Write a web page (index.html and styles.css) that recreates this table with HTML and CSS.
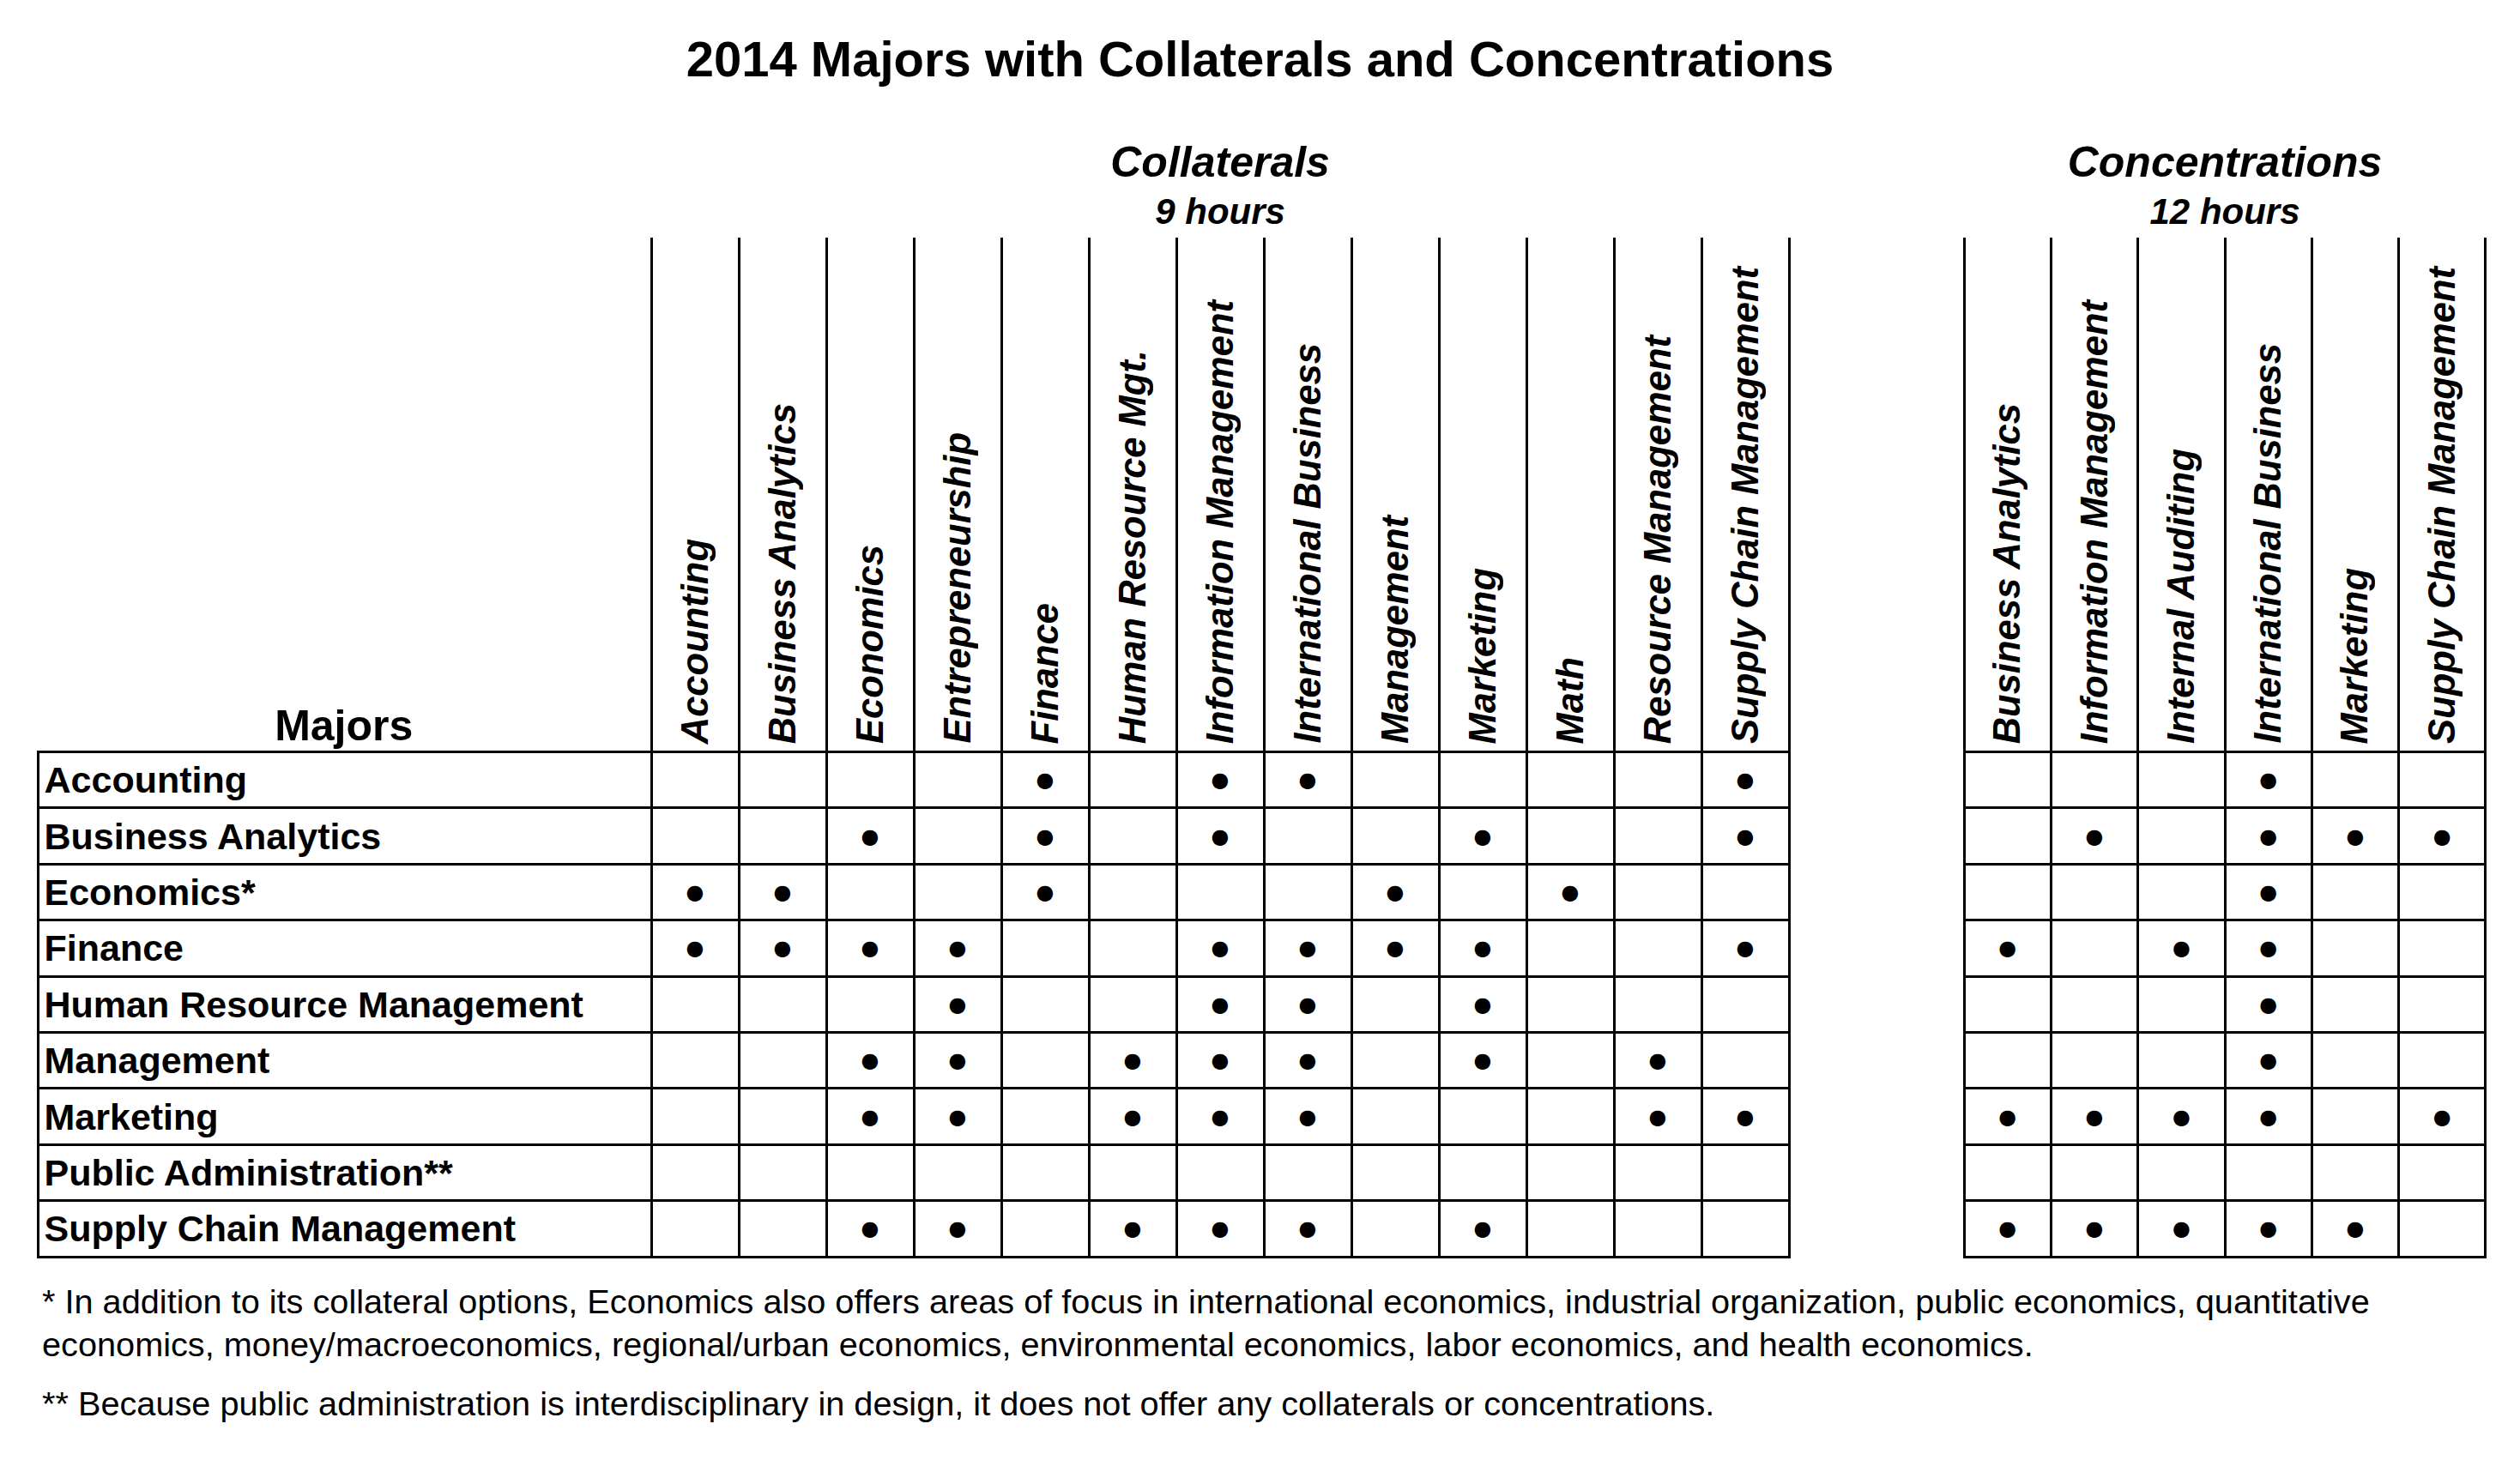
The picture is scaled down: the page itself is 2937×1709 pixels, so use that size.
FILE: index.html
```html
<!DOCTYPE html>
<html lang="en">
<head>
<meta charset="utf-8">
<title>2014 Majors with Collaterals and Concentrations</title>
<link rel="stylesheet" href="styles.css">
</head>
<body>
<h1 class="title">2014 Majors with Collaterals and Concentrations</h1>
<div class="chart">
<table class="grid">
  <colgroup>
    <col class="c-major">
    <col class="c-col"><col class="c-col"><col class="c-col"><col class="c-col"><col class="c-col"><col class="c-col"><col class="c-col"><col class="c-col"><col class="c-col"><col class="c-col"><col class="c-col"><col class="c-col"><col class="c-col">
    <col class="c-gap">
    <col class="c-con"><col class="c-con"><col class="c-con"><col class="c-con"><col class="c-con"><col class="c-con">
  </colgroup>
  <thead>
    <tr class="r-group">
      <th class="blank"></th>
      <th class="group" colspan="13"><div class="g-name">Collaterals</div><div class="g-hours">9 hours</div></th>
      <th class="gap"></th>
      <th class="group" colspan="6"><div class="g-name">Concentrations</div><div class="g-hours">12 hours</div></th>
    </tr>
    <tr class="r-head">
      <th class="majors">Majors</th>
      <th class="vh"><span>Accounting</span></th>
      <th class="vh"><span>Business Analytics</span></th>
      <th class="vh"><span>Economics</span></th>
      <th class="vh"><span>Entrepreneurship</span></th>
      <th class="vh"><span>Finance</span></th>
      <th class="vh"><span>Human Resource Mgt.</span></th>
      <th class="vh"><span>Information Management</span></th>
      <th class="vh"><span>International Business</span></th>
      <th class="vh"><span>Management</span></th>
      <th class="vh"><span>Marketing</span></th>
      <th class="vh"><span>Math</span></th>
      <th class="vh"><span>Resource Management</span></th>
      <th class="vh"><span>Supply Chain Management</span></th>
      <th class="gap"></th>
      <th class="vh"><span>Business Analytics</span></th>
      <th class="vh"><span>Information Management</span></th>
      <th class="vh"><span>Internal Auditing</span></th>
      <th class="vh"><span>International Business</span></th>
      <th class="vh"><span>Marketing</span></th>
      <th class="vh"><span>Supply Chain Management</span></th>
    </tr>
  </thead>
  <tbody>
    <tr>
      <th class="lbl">Accounting</th>
      <td></td><td></td><td></td><td></td><td>●</td><td></td><td>●</td><td>●</td><td></td><td></td><td></td><td></td><td>●</td>
      <td class="gap"></td>
      <td></td><td></td><td></td><td>●</td><td></td><td></td>
    </tr>
    <tr>
      <th class="lbl">Business Analytics</th>
      <td></td><td></td><td>●</td><td></td><td>●</td><td></td><td>●</td><td></td><td></td><td>●</td><td></td><td></td><td>●</td>
      <td class="gap"></td>
      <td></td><td>●</td><td></td><td>●</td><td>●</td><td>●</td>
    </tr>
    <tr>
      <th class="lbl">Economics*</th>
      <td>●</td><td>●</td><td></td><td></td><td>●</td><td></td><td></td><td></td><td>●</td><td></td><td>●</td><td></td><td></td>
      <td class="gap"></td>
      <td></td><td></td><td></td><td>●</td><td></td><td></td>
    </tr>
    <tr>
      <th class="lbl">Finance</th>
      <td>●</td><td>●</td><td>●</td><td>●</td><td></td><td></td><td>●</td><td>●</td><td>●</td><td>●</td><td></td><td></td><td>●</td>
      <td class="gap"></td>
      <td>●</td><td></td><td>●</td><td>●</td><td></td><td></td>
    </tr>
    <tr>
      <th class="lbl">Human Resource Management</th>
      <td></td><td></td><td></td><td>●</td><td></td><td></td><td>●</td><td>●</td><td></td><td>●</td><td></td><td></td><td></td>
      <td class="gap"></td>
      <td></td><td></td><td></td><td>●</td><td></td><td></td>
    </tr>
    <tr>
      <th class="lbl">Management</th>
      <td></td><td></td><td>●</td><td>●</td><td></td><td>●</td><td>●</td><td>●</td><td></td><td>●</td><td></td><td>●</td><td></td>
      <td class="gap"></td>
      <td></td><td></td><td></td><td>●</td><td></td><td></td>
    </tr>
    <tr>
      <th class="lbl">Marketing</th>
      <td></td><td></td><td>●</td><td>●</td><td></td><td>●</td><td>●</td><td>●</td><td></td><td></td><td></td><td>●</td><td>●</td>
      <td class="gap"></td>
      <td>●</td><td>●</td><td>●</td><td>●</td><td></td><td>●</td>
    </tr>
    <tr>
      <th class="lbl">Public Administration**</th>
      <td></td><td></td><td></td><td></td><td></td><td></td><td></td><td></td><td></td><td></td><td></td><td></td><td></td>
      <td class="gap"></td>
      <td></td><td></td><td></td><td></td><td></td><td></td>
    </tr>
    <tr>
      <th class="lbl">Supply Chain Management</th>
      <td></td><td></td><td>●</td><td>●</td><td></td><td>●</td><td>●</td><td>●</td><td></td><td>●</td><td></td><td></td><td></td>
      <td class="gap"></td>
      <td>●</td><td>●</td><td>●</td><td>●</td><td>●</td><td></td>
    </tr>
  </tbody>
</table>
</div>
<div class="notes">
  <p>* In addition to its collateral options, Economics also offers areas of focus in international economics, industrial organization, public economics, quantitative economics, money/macroeconomics, regional/urban economics, environmental economics, labor economics, and health economics.</p>
  <p>** Because public administration is interdisciplinary in design, it does not offer any collaterals or concentrations.</p>
</div>
</body>
</html>
```

FILE: styles.css
```css
html, body {
  margin: 0;
  padding: 0;
  background: #ffffff;
  color: #000000;
  font-family: "Liberation Sans", Arial, sans-serif;
}

.title {
  margin: 35px 0 0;
  font-size: 58px;
  font-weight: bold;
  line-height: 67px;
  text-align: center;
}

.chart {
  margin-top: 59px;
  padding-left: 42.5px;
}

.grid {
  border-collapse: collapse;
  table-layout: fixed;
  width: 2851px;
}

.c-major { width: 715px; }
.c-col { width: 102px; }
.c-gap { width: 204px; }
.c-con { width: 101.3px; }

.grid th,
.grid td {
  padding: 0;
  border: none;
}

/* group titles */
.r-group th {
  vertical-align: bottom;
  text-align: center;
  font-style: italic;
  font-weight: bold;
}
.g-name {
  font-size: 50px;
  line-height: 56px;
}
.g-hours {
  font-size: 42px;
  line-height: 60px;
}

/* rotated column heads */
.r-head th {
  height: 590px;
  vertical-align: bottom;
}
.r-head th.vh {
  border-left: 3px solid #000;
  border-right: 3px solid #000;
  text-align: center;
  font-size: 0;
  line-height: 0;
  padding-bottom: 8px;
}
.r-head th.vh span {
  display: inline-block;
  writing-mode: vertical-rl;
  transform: rotate(180deg);
  white-space: nowrap;
  font-size: 43.5px;
  line-height: 49px;
  font-style: italic;
  font-weight: bold;
}
.r-head th.majors {
  font-size: 50px;
  font-weight: bold;
  line-height: 57px;
  text-align: center;
  padding-bottom: 0;
}
.r-head th.gap {
  border: none;
}

/* body */
.grid tbody tr {
  height: 65.4px;
}
.grid tbody th.lbl {
  border: 3px solid #000;
  text-align: left;
  padding-left: 6px;
  font-size: 43px;
  font-weight: bold;
  line-height: 50px;
  white-space: nowrap;
  vertical-align: middle;
}
.grid tbody td {
  border: 3px solid #000;
  text-align: center;
  vertical-align: middle;
  font-family: "DejaVu Sans", "Liberation Sans", sans-serif;
  font-size: 24px;
  line-height: 28px;
}
.grid tbody td.gap {
  border: none;
}

/* footnotes */
.notes {
  margin-top: 25px;
  padding: 0 40px 0 49px;
}
.notes p {
  margin: 0 0 19px;
  font-size: 39.7px;
  line-height: 50px;
}
```
